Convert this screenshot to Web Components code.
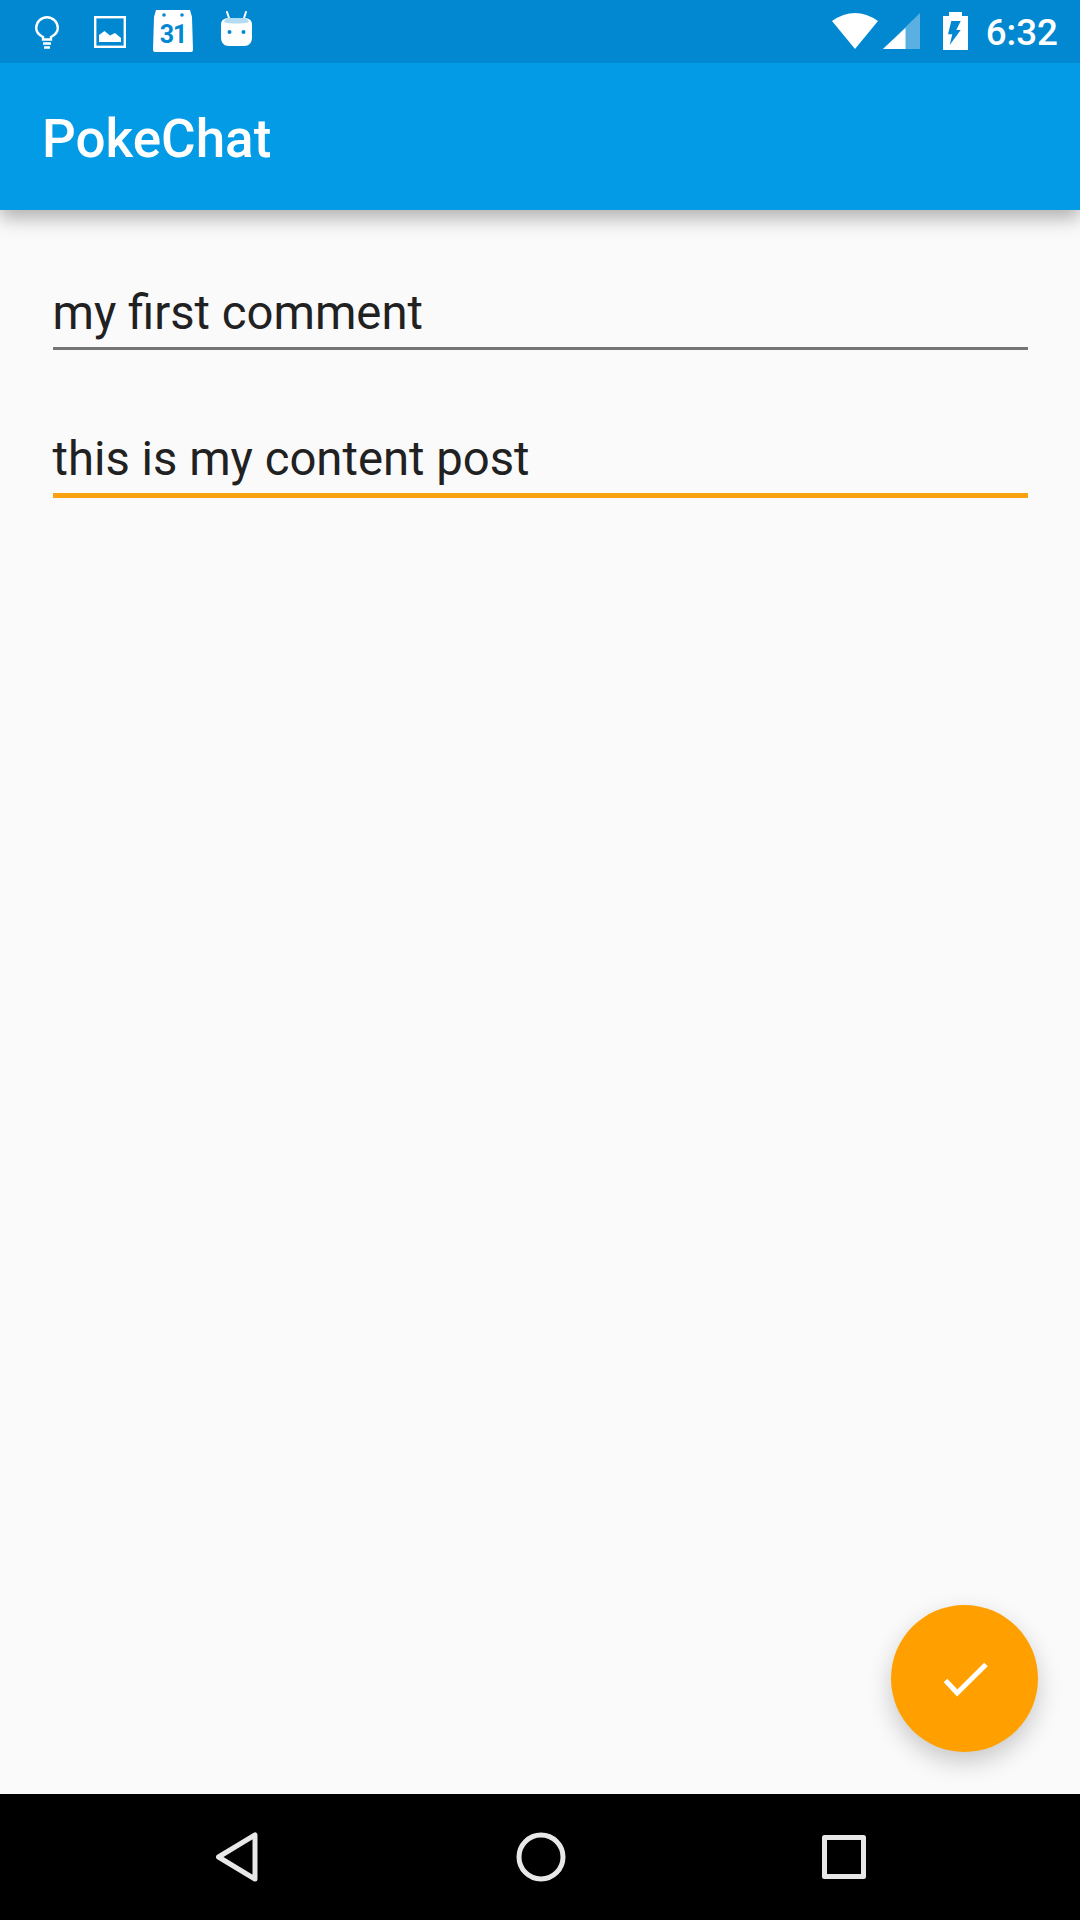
<!DOCTYPE html>
<html>
<head>
<meta charset="utf-8">
<style>
    html, body{ margin:0; padding:0; }
    body{
        width:1080px;
        height:1920px;
        background:#FAFAFA;
        font-family:Roboto, sans-serif;
        display:flex;
        flex-direction:column;
        overflow:hidden;
    }
    post-form{ flex:1; }
</style>
</head>
<body>
    <status-bar time="6:32"></status-bar>
    <app-bar>PokeChat</app-bar>
    <post-form>
        <text-field>my first comment</text-field>
        <text-field focused>this is my content post</text-field>
        <fab-button slot="fab"></fab-button>
    </post-form>
    <nav-bar></nav-bar>

<script>
const statusBarTemplate = document.createElement('template');
statusBarTemplate.innerHTML = `
    <style>
        :host{
            display:flex;
            align-items:flex-start;
            position:relative;
            z-index:2;
            box-sizing:border-box;
            height:63px;
            background:#0288D1;
            color:#fff;
            font-family:Roboto, sans-serif;
        }
        svg{ display:block; flex:none; }
        .bulb{ margin:16px 0 0 35px; }
        .image{ margin:16px 0 0 35px; }
        .cal{ margin:10px 0 0 27px; }
        .droid{ margin:11px 0 0 28px; }
        .wifi{ margin:13px 0 0 auto; }
        .signal{ margin:13px 0 0 5px; }
        .battery{ margin:12px 0 0 23px; }
        #time{
            margin:0 22px 0 18px;
            font-size:36.75px;
            font-weight:500;
            line-height:65px;
        }
    </style>
    <svg class="bulb" width="24" height="34" viewBox="0 0 24 34" fill="none" stroke="#fff" stroke-width="2.4">
        <path d="M8 23.5V21C4 19 1.2 16 1.2 12A10.8 10.8 0 0 1 22.8 12C22.8 16 20 19 16 21V23.5Z"/>
        <path d="M8 27.5H16M9 31.5H15" stroke-width="2.6"/>
    </svg>
    <svg class="image" width="32" height="32" viewBox="0 0 32 32">
        <rect x="1.2" y="1.2" width="29.6" height="29.6" fill="none" stroke="#fff" stroke-width="2.4"/>
        <path d="M5 26V19L10.5 15L16 19.5L21 17L27 22V26Z" fill="#fff"/>
    </svg>
    <svg class="cal" width="40" height="42" viewBox="0 0 40 42">
        <path d="M3 0H37L39 7 40 40Q40 42 38 42H2Q0 42 0 40L1 7Z" fill="#fff"/>
        <circle cx="11" cy="5" r="1.8" fill="#0288D1"/>
        <circle cx="29" cy="5" r="1.8" fill="#0288D1"/>
        <text x="20" y="33" text-anchor="middle" letter-spacing="-1" font-family="Roboto, sans-serif" font-weight="700" font-size="25" fill="#0288D1">31</text>
    </svg>
    <svg class="droid" width="31" height="36" viewBox="0 0 31 36">
        <path d="M8 7L6 1M23 7L25 1" stroke="#fff" stroke-width="2" stroke-linecap="round"/>
        <path d="M8 7H23C28 7 31 9 31 14V26C31 32 28 35 23 35H8C3 35 0 32 0 26V14C0 9 3 7 8 7Z" fill="#fff"/>
        <path d="M3 11C4 8 6 7 8 7H23C25 7 27 8 28 11C24 13 7 13 3 11Z" fill="#B3DBF1"/>
        <circle cx="8.5" cy="21" r="2" fill="#0288D1"/>
        <circle cx="22.5" cy="21" r="2" fill="#0288D1"/>
    </svg>
    <svg class="wifi" width="46" height="36" viewBox="0 0 46 36">
        <path d="M0 8Q23 -8 46 8L23 36Z" fill="#fff"/>
    </svg>
    <svg class="signal" width="37" height="36" viewBox="0 0 37 36">
        <path d="M37 0V36H0Z" fill="#fff" fill-opacity=".35"/>
        <path d="M22.500 15V36H0Z" fill="#fff"/>
    </svg>
    <svg class="battery" width="25" height="38" viewBox="0 0 25 38">
        <path d="M6 0H19V4H25V38H0V4H6Z" fill="#fff"/>
        <path d="M8.300 9H17.700L13.300 18H17.700L6.700 33L9.300 22.300H5Z" fill="#0288D1"/>
    </svg>
    <span id="time"></span>
`;

class StatusBar extends HTMLElement{
    constructor(){
        super();
        this.attachShadow({mode:'open'});
        this.shadowRoot.appendChild(statusBarTemplate.content.cloneNode(true));
    }
    connectedCallback(){
        this.shadowRoot.querySelector('#time').textContent = this.getAttribute('time');
    }
}

const appBarTemplate = document.createElement('template');
appBarTemplate.innerHTML = `
    <style>
        :host{
            display:block;
            position:relative;
            z-index:1;
            box-sizing:border-box;
            height:147px;
            padding:5px 0 0 42px;
            background:#039BE5;
            box-shadow:0 8px 18px rgba(0,0,0,.3);
            color:#fff;
            font-family:Roboto, sans-serif;
            font-size:53px;
            font-weight:500;
            line-height:142px;
        }
    </style>
    <slot></slot>
`;

class AppBar extends HTMLElement{
    constructor(){
        super();
        this.attachShadow({mode:'open'});
        this.shadowRoot.appendChild(appBarTemplate.content.cloneNode(true));
    }
}

const postFormTemplate = document.createElement('template');
postFormTemplate.innerHTML = `
    <style>
        :host{
            display:flex;
            flex-direction:column;
            gap:48px;
            position:relative;
            box-sizing:border-box;
            padding:42px 52.5px 0;
        }
        ::slotted(fab-button){
            position:absolute;
            right:42px;
            bottom:42px;
        }
    </style>
    <slot></slot>
    <slot name="fab"></slot>
`;

class PostForm extends HTMLElement{
    constructor(){
        super();
        this.attachShadow({mode:'open'});
        this.shadowRoot.appendChild(postFormTemplate.content.cloneNode(true));
    }
}

const textFieldTemplate = document.createElement('template');
textFieldTemplate.innerHTML = `
    <style>
        :host{
            display:block;
            padding:31px 0 4px;
            border-bottom:3px solid #757575;
            color:#212121;
            font-family:Roboto, sans-serif;
            font-size:47.25px;
            line-height:60px;
            white-space:nowrap;
        }
        :host([focused]){
            border-bottom:5px solid #F9A10F;
        }
    </style>
    <slot></slot>
`;

class TextField extends HTMLElement{
    constructor(){
        super();
        this.attachShadow({mode:'open'});
        this.shadowRoot.appendChild(textFieldTemplate.content.cloneNode(true));
    }
}

const fabTemplate = document.createElement('template');
fabTemplate.innerHTML = `
    <style>
        :host{
            display:flex;
            align-items:center;
            justify-content:center;
            width:147px;
            height:147px;
            border-radius:50%;
            background:#FFA000;
            box-shadow:0 10px 24px rgba(0,0,0,.2);
        }
        svg{ display:block; }
    </style>
    <svg width="63" height="63" viewBox="0 0 63 63" fill="none" stroke="#fff" stroke-width="5">
        <path d="M12.500 33.500L24.200 46L53 17.500"/>
    </svg>
`;

class FabButton extends HTMLElement{
    constructor(){
        super();
        this.attachShadow({mode:'open'});
        this.shadowRoot.appendChild(fabTemplate.content.cloneNode(true));
    }
}

const navBarTemplate = document.createElement('template');
navBarTemplate.innerHTML = `
    <style>
        :host{
            display:grid;
            grid-template-columns:repeat(3, 1fr);
            align-items:center;
            justify-items:center;
            box-sizing:border-box;
            height:126px;
            padding:0 84px 0 86px;
            background:#000;
        }
        svg{ display:block; }
    </style>
    <svg width="44" height="50" viewBox="0 0 44 50" fill="none" stroke="#E8E8E8" stroke-width="5" stroke-linejoin="round">
        <path d="M39 3V47L2.500 25Z"/>
    </svg>
    <svg width="50" height="50" viewBox="0 0 50 50" fill="none" stroke="#E8E8E8" stroke-width="5">
        <circle cx="25" cy="25" r="22"/>
    </svg>
    <svg width="44" height="44" viewBox="0 0 44 44" fill="none" stroke="#E8E8E8" stroke-width="5" stroke-linejoin="round">
        <rect x="2.500" y="2.500" width="39" height="39"/>
    </svg>
`;

class NavBar extends HTMLElement{
    constructor(){
        super();
        this.attachShadow({mode:'open'});
        this.shadowRoot.appendChild(navBarTemplate.content.cloneNode(true));
    }
}

window.customElements.define('status-bar', StatusBar);
window.customElements.define('app-bar', AppBar);
window.customElements.define('post-form', PostForm);
window.customElements.define('text-field', TextField);
window.customElements.define('fab-button', FabButton);
window.customElements.define('nav-bar', NavBar);
</script>
</body>
</html>
